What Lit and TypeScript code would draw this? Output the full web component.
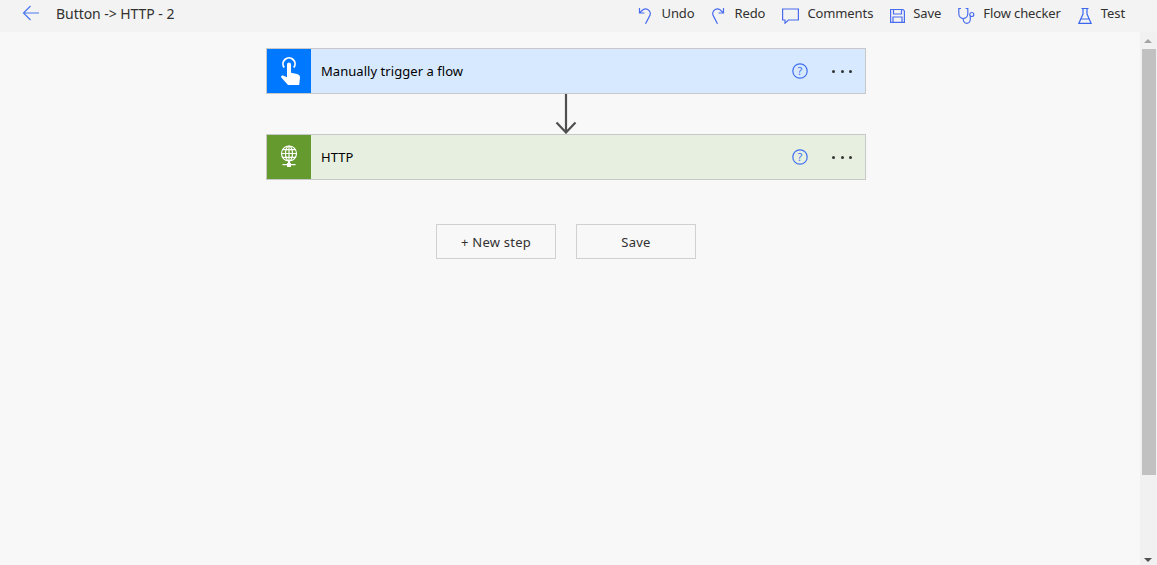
import { LitElement, html, css, svg } from "lit";
import { customElement } from "lit/decorators.js";

const S = "#4a6cf0";
const icons: Record<string, unknown> = {
  undo: svg`<svg class="ic" width="15" height="20" viewBox="0 0 15 20"><path d="M1.500 4v5h5M1.600 8.800 5 5.700c1.500-1.100 3.200-1.200 4.800-.3 2.600 1.500 3.200 4.600 1.600 7L7.500 19.800" fill="none" stroke="${S}" stroke-width="1.200"/></svg>`,
  redo: svg`<svg class="ic" width="15" height="20" viewBox="0 0 15 20"><path d="M12.500 4v5h-5M12.400 8.800 9 5.700c-1.500-1.100-3.200-1.200-4.800-.3-2.600 1.500-3.200 4.600-1.600 7l3.900 7.400" fill="none" stroke="${S}" stroke-width="1.200"/></svg>`,
  comments: svg`<svg class="ic" width="17" height="20" viewBox="0 0 17 20"><path d="M.6 5h15.800v11H6.500l-3.500 3.200V16H.6z" fill="none" stroke="${S}" stroke-width="1.200"/></svg>`,
  save: svg`<svg class="ic" width="15" height="20" viewBox="0 0 15 20"><path d="M.6 5.500h12.400l1.400 1.400v11.500H.6z" fill="none" stroke="${S}" stroke-width="1.200"/><path d="M3.500 6v4h8V6M3 18.500v-5.500h9v5.500" fill="none" stroke="${S}" stroke-width="1.200"/></svg>`,
  checker: svg`<svg class="ic" width="17" height="20" viewBox="0 0 17 20"><path d="M3 4.500H.8v5c0 3 2 5 4.500 5s4.500-2 4.500-5v-5H7.600" fill="none" stroke="${S}" stroke-width="1.200"/><path d="M5.300 14.500v.8c0 2.200 1.500 4 3.500 4s3.500-1.800 3.500-4v-3" fill="none" stroke="${S}" stroke-width="1.200"/><circle cx="13.800" cy="10.500" r="2" fill="none" stroke="${S}" stroke-width="1.200"/></svg>`,
  test: svg`<svg class="ic" width="15" height="20" viewBox="0 0 15 20"><path d="M3.500 4.500h7M5 4.500v5.500L.9 19.300h12.200L9 10V4.500M3 15h8" fill="none" stroke="#3b66ee" stroke-width="1.200"/></svg>`,
};

const touch = svg`<svg class="touch" width="20" height="28" viewBox="0 0 20 28"><path d="M3.200 10.500a6 6 0 1 1 9.600 0" fill="none" stroke="#fff" stroke-width="1.800"/><path d="M6 7.500a2 2 0 0 1 4 0v8.300l6 1.200c2 .4 3 1.500 3 3.500l-.8 7.500H7L.3 20.500c-.8-1.300.8-2.600 2.300-1.800L6 20.300z" fill="#fff"/></svg>`;

const globe = svg`<svg width="18" height="24" viewBox="0 0 18 24"><g fill="none" stroke="#fff" stroke-width="1.200"><circle cx="9" cy="8.500" r="7.500"/><ellipse cx="9" cy="8.500" rx="3.500" ry="7.500"/><path d="M9 1v15M1.500 8.500h15M2.500 4.700h13M2.500 12.300h13"/></g><path d="M8 16h2v3H8zM2.500 19h13v1.300h-13zM7 18h4v4H7z" fill="#fff"/></svg>`;

const help = svg`<svg class="help" width="16" height="16" viewBox="0 0 16 16"><circle cx="8" cy="8" r="7.200" fill="none" stroke="#3f6ff0" stroke-width="1.200"/><text x="8" y="12" text-anchor="middle" font-size="11" font-family="Noto Sans, sans-serif" fill="#3f6ff0">?</text></svg>`;

@customElement("app-root")
export class AppRoot extends LitElement {
  static styles = css`
    :host { display: flex; flex-direction: column; height: 100vh; overflow: hidden; background: #f8f8f8;
      font-family: "Noto Sans", "Open Sans", sans-serif; font-size: 13px; color: #323130; }
    .bar { height: 32px; flex: none; background: #f3f3f3; display: flex; align-items: center; padding: 0 32px 6px 22px; box-sizing: border-box; }
    .back { display: block; margin-right: 17px; }
    .title { flex: 1; font-size: 14px; letter-spacing: -0.05px; }
    .cmd { display: flex; align-items: center; letter-spacing: -0.1px; margin-left: 17px; gap: 8px; white-space: nowrap; }
    .ic { display: block; margin-top: 2px; }
    .body { flex: 1; display: flex; min-height: 0; }
    .canvas { flex: 1; display: flex; flex-direction: column; align-items: center; padding: 16px 8px 0 0; }
    .card { width: 600px; height: 46px; box-sizing: border-box; border: 1px solid #c8c8c8; display: flex; align-items: center; color: #000; }
    .blue { background: #d7e9ff; }
    .green { background: #e7f0e0; }
    .tile { width: 44px; align-self: stretch; display: flex; align-items: center; justify-content: center; }
    .blue .tile { background: #0078ff; }
    .green .tile { background: #659a2f; }
    .touch { margin-left: 3px; }
    .name { flex: 1; padding-left: 10px; letter-spacing: 0.05px; }
    .help { display: block; margin-right: 24px; }
    .dots { display: flex; gap: 5.500px; margin-right: 13px; }
    .dots i { width: 3px; height: 3px; border-radius: 50%; background: #333; }
    .arrow { display: block; height: 40px; }
    .actions { display: flex; gap: 20px; margin-top: 44px; }
    .btn { width: 120px; height: 35px; box-sizing: border-box; border: 1px solid #d0d0d0; background: #f8f8f8; display: flex; align-items: center; justify-content: center; letter-spacing: 0.25px; }
    .scroll { width: 17px; flex: none; background: #f1f1f1; position: relative; display: flex; flex-direction: column; align-items: center; }
    .thumb { width: 14px; height: 426px; background: #c1c1c1; margin-top: 17px; }
    .up, .down { position: absolute; left: 4px; width: 0; height: 0; border-left: 4px solid transparent; border-right: 4px solid transparent; }
    .up { top: 7px; border-bottom: 4px solid #a3a3a3; }
    .down { bottom: 3px; border-top: 4px solid #505050; }
  `;

  private cmd(icon: string, label: string) {
    return html`<div class="cmd">${icons[icon]}<span>${label}</span></div>`;
  }

  private card(kind: string, icon: unknown, label: string) {
    return html`<div class="card ${kind}">
      <div class="tile">${icon}</div>
      <div class="name">${label}</div>
      ${help}
      <div class="dots"><i></i><i></i><i></i></div>
    </div>`;
  }

  render() {
    return html`
      <div class="bar">
        <svg class="back" width="17" height="16" viewBox="0 0 17 16"><path d="M17 8H1.500M8.500 1 1.500 8l7 7" fill="none" stroke="#4a78f5" stroke-width="1.200"/></svg>
        <div class="title">Button -&gt; HTTP - 2</div>
        ${this.cmd("undo", "Undo")}
        ${this.cmd("redo", "Redo")}
        ${this.cmd("comments", "Comments")}
        ${this.cmd("save", "Save")}
        ${this.cmd("checker", "Flow checker")}
        ${this.cmd("test", "Test")}
      </div>
      <div class="body">
        <div class="canvas">
          ${this.card("blue", touch, "Manually trigger a flow")}
          <svg class="arrow" width="22" height="40" viewBox="0 0 22 40"><path d="M11 0v39M1.500 28.500 11 38.500l9.500-10" fill="none" stroke="#4f4f4f" stroke-width="2.200"/></svg>
          ${this.card("green", globe, "HTTP")}
          <div class="actions">
            <div class="btn">+ New step</div>
            <div class="btn">Save</div>
          </div>
        </div>
        <div class="scroll"><span class="up"></span><div class="thumb"></div><span class="down"></span></div>
      </div>`;
  }
}
